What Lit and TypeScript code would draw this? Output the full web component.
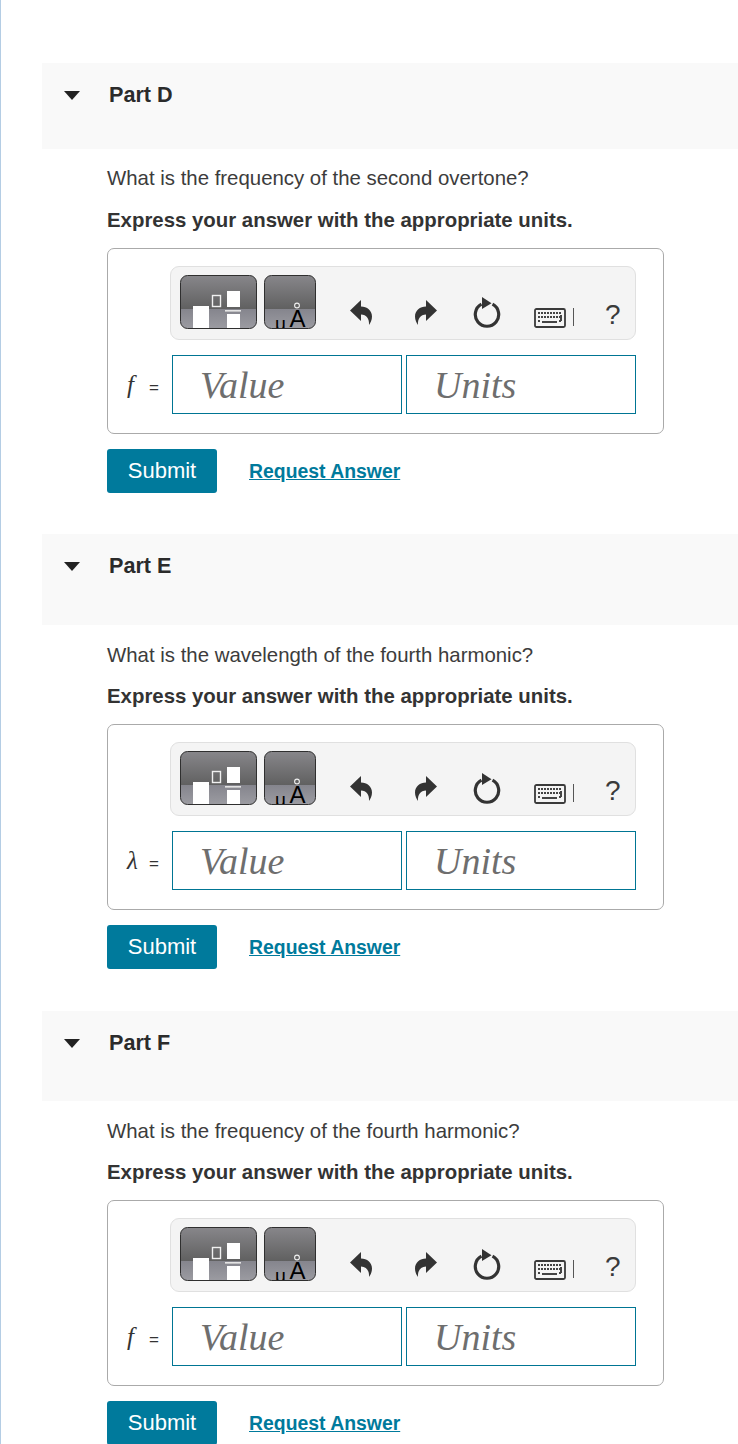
import { LitElement, html, css, svg } from "lit";
import { customElement } from "lit/decorators.js";

const templateIcon = svg`<svg class="btn-svg" width="77" height="54" viewBox="0 0 77 54">
  <defs>
    <linearGradient id="gt" x1="0" y1="0" x2="0" y2="1"><stop offset="0" stop-color="#88878b"/><stop offset="1" stop-color="#5f5f5f"/></linearGradient>
    <linearGradient id="gb" x1="0" y1="0" x2="0" y2="1"><stop offset="0" stop-color="#85858d"/><stop offset="1" stop-color="#9c9ca2"/></linearGradient>
    <clipPath id="tc"><rect x="0.5" y="0.5" width="76" height="53" rx="7"/></clipPath>
  </defs>
  <g clip-path="url(#tc)">
    <rect width="77" height="35" fill="url(#gt)"/>
    <rect y="34" width="77" height="20" fill="url(#gb)"/>
    <rect x="13" y="31" width="16" height="23" fill="#fff"/>
    <rect x="32.5" y="20.5" width="8" height="11" fill="none" stroke="#f0f0f0" stroke-width="1.4"/>
    <rect x="47" y="16" width="13" height="16" fill="#fff"/>
    <rect x="45" y="35" width="16" height="1.6" fill="#e4e4e4"/>
    <rect x="47" y="39" width="13" height="15" fill="#fff"/>
  </g>
  <rect x="0.5" y="0.5" width="76" height="53" rx="7" fill="none" stroke="#2f2f2f"/>
</svg>`;

const unitsIcon = svg`<svg class="btn-svg" width="52" height="54" viewBox="0 0 52 54">
  <defs>
    <clipPath id="uc"><rect x="0.5" y="0.5" width="51" height="53" rx="7"/></clipPath>
  </defs>
  <g clip-path="url(#uc)">
    <rect width="52" height="35" fill="url(#gt)"/>
    <rect y="34" width="52" height="20" fill="url(#gb)"/>
    <text class="unit-text" x="11" y="55" font-size="19">μ</text>
    <text class="unit-text" x="25.5" y="52" font-size="24">A</text>
    <circle cx="33" cy="30.5" r="2.4" fill="none" stroke="#efefef" stroke-width="1.1"/>
  </g>
  <rect x="0.5" y="0.5" width="51" height="53" rx="7" fill="none" stroke="#2f2f2f"/>
</svg>`;

const arrowPath = "M0 10.5 L11 0 L11 6.5 C17 6.5 22 10.5 22 16.5 C22 20 20.5 23 19 25 C19.5 19 16.5 14.5 11 14.5 L11 21 Z";

const undoIcon = svg`<svg class="ico" width="22" height="25" viewBox="0 0 22 25"><path d=${arrowPath} fill="#333"/></svg>`;
const redoIcon = svg`<svg class="ico" width="22" height="25" viewBox="0 0 22 25"><g transform="translate(22 0) scale(-1 1)"><path d=${arrowPath} fill="#333"/></g></svg>`;
const resetIcon = svg`<svg class="ico" width="28" height="31" viewBox="0 0 28 31">
  <path d="M8.5 7.2 A11.7 11.7 0 1 0 19.5 7.2" fill="none" stroke="#333" stroke-width="3.2"/>
  <path d="M9 0 L18.5 6.3 L9 12 Z" fill="#333"/>
</svg>`;
const keyRow = (y: number, xs: number[], w = 2) => xs.map((x) => svg`<rect x=${x} y=${y} width=${w} height="2" fill="#444"/>`);
const keyboardIcon = svg`<svg class="ico" width="32" height="20" viewBox="0 0 32 20">
  <rect x="1" y="1" width="30" height="18" rx="1.5" fill="#f4f4f4" stroke="#3a3a3a" stroke-width="1.8"/>
  ${keyRow(4, [4, 7, 10, 13, 16, 19, 22, 25])}
  ${keyRow(8, [4, 7, 10, 13, 16, 19, 22, 25])}
  ${keyRow(12, [4, 25])}
  <rect x="8" y="13" width="15" height="2" fill="#444"/>
  <rect x="26" y="7" width="2" height="6" fill="#444"/>
</svg>`;

interface Part {
  name: string;
  cls: string;
  question: string;
  symbol: string;
}

const PARTS: Part[] = [
  { name: "Part D", cls: "d", question: "What is the frequency of the second overtone?", symbol: "f" },
  { name: "Part E", cls: "e", question: "What is the wavelength of the fourth harmonic?", symbol: "λ" },
  { name: "Part F", cls: "f", question: "What is the frequency of the fourth harmonic?", symbol: "f" },
];

@customElement("app-root")
export class AppRoot extends LitElement {
  static styles = css`
    :host {
      display: block;
      width: 738px;
      height: 1444px;
      overflow: hidden;
      box-sizing: border-box;
      background: #fff;
      border-left: 1px solid #b4cde4;
      padding: 63px 0 0 41px;
      font-family: "Liberation Sans", Arial, sans-serif;
      color: #333;
    }
    .head {
      background: #f9f9f9;
      display: flex;
      align-items: flex-start;
      padding: 20px 0 0 22px;
      box-sizing: border-box;
    }
    .part.d .head { height: 86px; }
    .part.e .head { height: 91px; }
    .part.f .head { height: 90px; }
    .part.d { margin-bottom: 41px; }
    .part.e { margin-bottom: 42px; }
    .tri {
      width: 0;
      height: 0;
      margin-top: 8px;
      border-left: 8.5px solid transparent;
      border-right: 8.5px solid transparent;
      border-top: 9px solid #222;
    }
    .title {
      margin-left: 29px;
      font-size: 21.6px;
      line-height: 24px;
      font-weight: bold;
      color: #2b2b2b;
    }
    .body {
      padding: 17px 0 0 65px;
    }
    .q, .x {
      margin: 0;
      font-size: 20.4px;
      line-height: 24px;
    }
    .q { color: #3c3c3c; }
    .part.e .q, .part.f .q { padding-top: 1px; }
    .x { font-weight: bold; margin-top: 18px; color: #333; }
    .part.e .x, .part.f .x { margin-top: 17px; }
    .box {
      margin-top: 16px;
      width: 557px;
      height: 186px;
      box-sizing: border-box;
      border: 1px solid #aaa;
      border-radius: 7px;
      padding: 17px 27px 0 62px;
    }
    .toolbar {
      height: 74px;
      width: 466px;
      box-sizing: border-box;
      background: #f4f4f4;
      border: 1px solid #e0e0e0;
      border-radius: 9px;
      display: flex;
      align-items: flex-start;
      padding: 8px 0 0 9px;
    }
    .btn-svg { display: block; }
    .units { margin-left: 7px; }
    .tools {
      display: flex;
      align-items: flex-start;
    }
    .ico { display: block; flex: none; }
    .undo { margin: 25px 0 0 34px; }
    .redo { margin: 25px 0 0 43px; }
    .reset { margin: 22px 0 0 36px; }
    .kbd { margin: 33px 0 0 33px; }
    .bar { width: 1px; height: 18px; margin: 33px 0 0 7px; background: #555; flex: none; }
    .help { margin: 23px 0 0 31px; font-size: 28px; line-height: 34px; color: #3a3a3a; }
    .row {
      display: flex;
      align-items: center;
      margin-top: 15px;
      height: 59px;
    }
    .label {
      width: 64px;
      margin-left: -62px;
      box-sizing: border-box;
      padding-left: 19px;
      display: flex;
      align-items: baseline;
      gap: 6px;
      font-size: 17px;
      color: #333;
    }
    .sym { font-family: "Liberation Serif", serif; font-style: italic; font-size: 25px; width: 16px; }
    .sym.up { font-style: normal; font-family: "DejaVu Serif", serif; font-size: 20px; }
    .field {
      width: 230px;
      height: 59px;
      box-sizing: border-box;
      border: 1px solid #007593;
      background: #fff;
      display: flex;
      align-items: center;
      font-family: "Liberation Serif", serif;
      font-style: italic;
      font-size: 38px;
      color: #6e6e6e;
      padding-left: 27px;
    }
    .field + .field { margin-left: 4px; }
    .actions {
      display: flex;
      align-items: center;
      margin-top: 15px;
      height: 44px;
    }
    .submit {
      width: 110px;
      height: 44px;
      background: #007a9c;
      color: #fff;
      border-radius: 3px;
      display: flex;
      align-items: center;
      justify-content: center;
      font-size: 22px;
    }
    .link {
      margin-left: 32px;
      color: #007a9c;
      font-size: 19.4px;
      font-weight: bold;
      text-decoration: underline;
    }
  `;

  render() {
    return PARTS.map(
      (p) => html`
        <section class="part ${p.cls}">
          <div class="head">
            <span class="tri"></span>
            <span class="title">${p.name}</span>
          </div>
          <div class="body">
            <p class="q">${p.question}</p>
            <p class="x">Express your answer with the appropriate units.</p>
            <div class="box">
              <div class="toolbar">
                ${templateIcon}
                <div class="units">${unitsIcon}</div>
                <div class="tools">
                  <div class="undo">${undoIcon}</div>
                  <div class="redo">${redoIcon}</div>
                  <div class="reset">${resetIcon}</div>
                  <div class="kbd">${keyboardIcon}</div>
                  <span class="bar"></span>
                  <span class="help">?</span>
                </div>
              </div>
              <div class="row">
                <div class="label">
                  <span class="sym">${p.symbol}</span><span>=</span>
                </div>
                <div class="field">Value</div>
                <div class="field">Units</div>
              </div>
            </div>
            <div class="actions">
              <div class="submit">Submit</div>
              <a class="link">Request Answer</a>
            </div>
          </div>
        </section>
      `
    );
  }
}
